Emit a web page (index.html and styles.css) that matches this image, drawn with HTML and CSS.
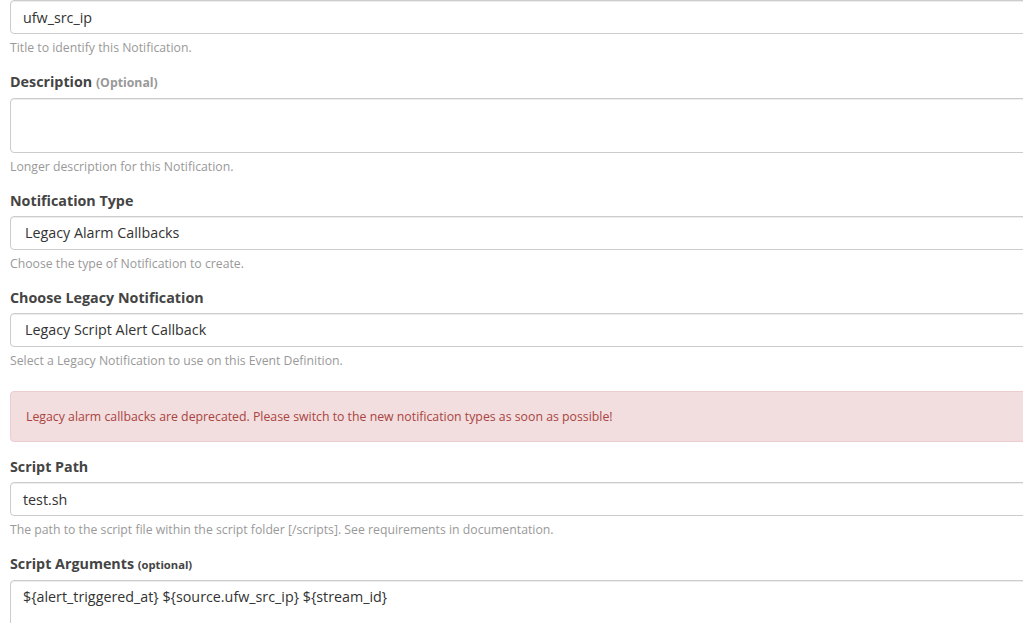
FILE: index.html
```html
<!DOCTYPE html>
<html>
<head>
<meta charset="utf-8">
<link rel="stylesheet" href="styles.css">
</head>
<body>
<form class="form">
  <div class="group">
    <input class="control" type="text" value="ufw_src_ip">
    <span class="help">Title to identify this Notification.</span>
  </div>
  <div class="group">
    <label class="label">Description <small class="opt">(Optional)</small></label>
    <textarea class="control area"></textarea>
    <span class="help">Longer description for this Notification.</span>
  </div>
  <div class="group">
    <label class="label">Notification Type</label>
    <div class="control select">Legacy Alarm Callbacks</div>
    <span class="help">Choose the type of Notification to create.</span>
  </div>
  <div class="group">
    <label class="label">Choose Legacy Notification</label>
    <div class="control select">Legacy Script Alert Callback</div>
    <span class="help">Select a Legacy Notification to use on this Event Definition.</span>
  </div>
  <div class="alert">Legacy alarm callbacks are deprecated. Please switch to the new notification types as soon as possible!</div>
  <div class="group">
    <label class="label">Script Path</label>
    <input class="control" type="text" value="test.sh">
    <span class="help">The path to the script file within the script folder [/scripts]. See requirements in documentation.</span>
  </div>
  <div class="group">
    <label class="label">Script Arguments <small class="opt opt-lower">(optional)</small></label>
    <textarea class="control area tall">${alert_triggered_at} ${source.ufw_src_ip} ${stream_id}</textarea>
  </div>
</form>
</body>
</html>
```

FILE: styles.css
```css
html, body {
  margin: 0;
  padding: 0;
  background: #fff;
  overflow: hidden;
}
body {
  font-family: "Open Sans", "DejaVu Sans", sans-serif;
  color: #333;
  font-size: 14px;
}
.form {
  display: flex;
  flex-direction: column;
  width: 1040px;
  margin: 0 0 0 10px;
}
.group {
  display: flex;
  flex-direction: column;
  margin-bottom: 16px;
}
.label {
  font-weight: 700;
  font-size: 14.3px;
  line-height: 20px;
  margin-bottom: 5px;
  color: #444;
}
.opt {
  font-size: 12.3px;
  color: #999;
  font-weight: 700;
}
.opt-lower {
  font-size: 11.2px;
  color: #444;
}
.control {
  box-sizing: border-box;
  display: block;
  width: 100%;
  height: 34px;
  padding: 6px 12px;
  font-family: "Open Sans", "DejaVu Sans", sans-serif;
  font-size: 14.3px;
  line-height: 20px;
  color: #333;
  background: #fff;
  border: 1px solid #ccc;
  border-radius: 4px;
  box-shadow: inset 0 1px 1px rgba(0,0,0,0.075);
  margin: 0;
}
.select {
  padding-left: 14px;
}
.area {
  height: 55px;
  resize: none;
}
.tall {
  height: 80px;
}
.help {
  display: block;
  margin-top: 5px;
  font-size: 12.25px;
  line-height: 17px;
  color: #999;
}
.alert {
  box-sizing: border-box;
  margin-top: 6px;
  margin-bottom: 15px;
  padding: 15px;
  font-size: 12.3px;
  line-height: 19px;
  color: #a94442;
  background: #f2dede;
  border: 1px solid #ebccd1;
  border-radius: 4px;
}
```
